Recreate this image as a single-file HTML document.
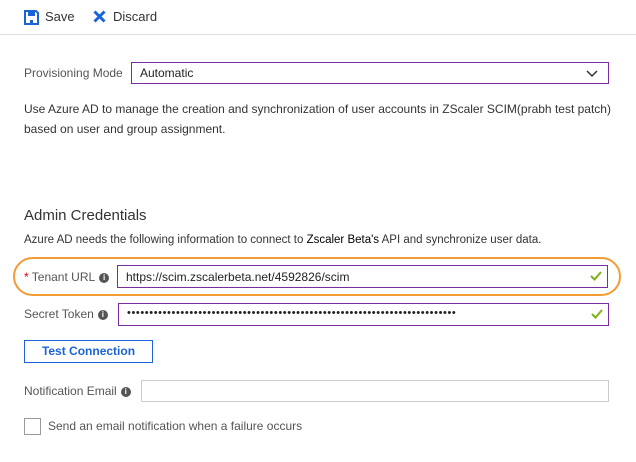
<!DOCTYPE html>
<html><head><style>
body{margin:0;width:636px;height:462px;background:#fff;font-family:"Segoe UI","Liberation Sans",sans-serif;font-size:12px;color:#333;position:relative;overflow:hidden}
.a{position:absolute;white-space:nowrap}
.box{position:absolute;border:1px solid #7a2da0;box-sizing:border-box;background:#fff}
.g{color:#555}
.i{display:inline-block;width:10px;height:10px;border-radius:50%;background:#555;color:#fff;font-size:8px;line-height:10px;text-align:center;font-weight:bold;vertical-align:middle;margin-left:4px}
.chk{position:absolute;right:4px;top:3px}
</style></head><body>
<svg class="a" style="left:24px;top:10px" width="15" height="15" viewBox="0 0 15 15"><path d="M1 1h11l2 2v11H1z" fill="none" stroke="#1a63d8" stroke-width="2"/><rect x="4" y="2" width="7" height="4" fill="#1a63d8"/><rect x="6" y="10" width="3" height="3" fill="#1a63d8"/></svg>
<div class="a" style="left:45px;top:9px;font-size:13px;color:#333">Save</div>
<svg class="a" style="left:93px;top:10px" width="13" height="13" viewBox="0 0 13 13"><path d="M1.5 1.5L11.5 11.5M11.5 1.5L1.5 11.5" stroke="#1a63d8" stroke-width="3"/></svg>
<div class="a" style="left:113px;top:9px;font-size:13px;color:#333">Discard</div>
<div class="a" style="left:0;top:34px;width:636px;height:1px;background:#ddd"></div>
<div class="a g" style="left:24px;top:66px">Provisioning Mode</div>
<div class="box" style="left:131px;top:62px;width:478px;height:22px"><span class="a" style="left:8px;top:3px;color:#222">Automatic</span>
<svg class="a" style="right:10px;top:7px" width="12" height="8" viewBox="0 0 12 8"><path d="M1 1l5 5 5-5" fill="none" stroke="#333" stroke-width="1.5"/></svg></div>
<div class="a" style="left:24px;top:102px;color:#333">Use Azure AD to manage the creation and synchronization of user accounts in ZScaler SCIM(prabh test patch)</div>
<div class="a" style="left:24px;top:122px;color:#333">based on user and group assignment.</div>
<div class="a" style="left:24px;top:207px;font-size:15px;color:#333">Admin Credentials</div>
<div class="a" style="left:24px;top:234px;font-size:11.5px;color:#333">Azure AD needs the following information to connect to <span style="color:#000">Zscaler Beta's</span> API and synchronize user data.</div>
<div class="a" style="left:13px;top:257px;width:608px;height:39px;border:2px solid #f39c34;border-radius:20px;box-sizing:border-box"></div>
<div class="a g" style="left:24px;top:270px"><span style="color:#d00">*</span> Tenant URL<span class="i">i</span></div>
<div class="box" style="left:117px;top:265px;width:491px;height:23px"><span class="a" style="left:8px;top:4px;color:#222">https://scim.zscalerbeta.net/4592826/scim</span><svg class="chk" width="14" height="14" viewBox="0 0 14 14"><path d="M2 7l3.5 3.5L12 3" fill="none" stroke="#7ab317" stroke-width="2"/></svg></div>
<div class="a g" style="left:24px;top:307px">Secret Token<span class="i">i</span></div>
<div class="box" style="left:118px;top:303px;width:491px;height:23px"><span class="a" style="left:8px;top:3px;color:#222;font-size:11px;letter-spacing:0.6px">••••••••••••••••••••••••••••••••••••••••••••••••••••••••••••••••••••••••••</span><svg class="chk" width="14" height="14" viewBox="0 0 14 14"><path d="M2 7l3.5 3.5L12 3" fill="none" stroke="#7ab317" stroke-width="2"/></svg></div>
<div class="a" style="left:24px;top:340px;width:129px;height:23px;border:1px solid #1a63d8;box-sizing:border-box;color:#1a63d8;font-weight:bold;text-align:center;line-height:21px">Test Connection</div>
<div class="a g" style="left:24px;top:384px">Notification Email<span class="i">i</span></div>
<div class="a" style="left:141px;top:380px;width:468px;height:22px;border:1px solid #ccc;box-sizing:border-box"></div>
<div class="a" style="left:24px;top:418px;width:17px;height:17px;border:1px solid #999;box-sizing:border-box"></div>
<div class="a g" style="left:48px;top:419px">Send an email notification when a failure occurs</div>
</body></html>
